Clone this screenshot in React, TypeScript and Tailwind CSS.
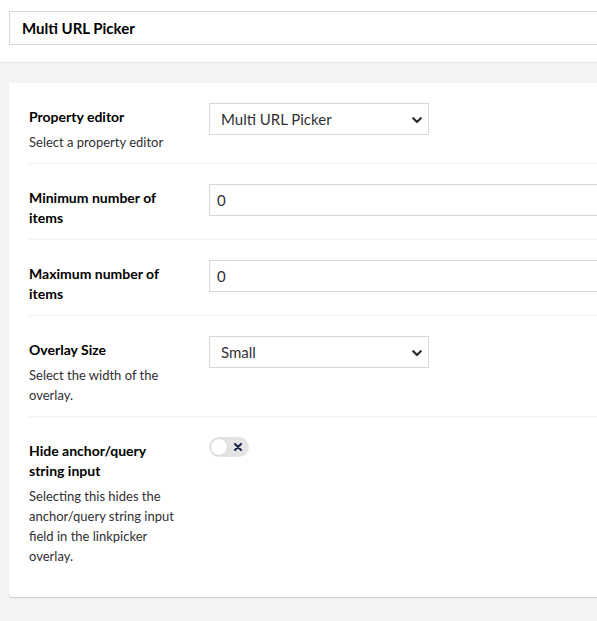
import React from "react";

const font = { fontFamily: "Lato, 'Open Sans', sans-serif" };

function Chevron() {
  return (
    <svg width="10" height="7" viewBox="0 0 10 7" className="absolute right-[6px] top-[13px]">
      <path d="M1.3 1.3 L5 5 L8.7 1.3" stroke="#303033" strokeWidth="2.3" fill="none" strokeLinecap="round" strokeLinejoin="round" />
    </svg>
  );
}

function SelectBox({ value }: { value: string }) {
  return (
    <div className="relative w-[220px] h-[32px] border border-[#d8d7d9] bg-white flex items-center pl-[11px] text-[15px] text-[#303033]">
      {value}
      <Chevron />
    </div>
  );
}

function TextBox({ value }: { value: string }) {
  return (
    <div className="flex-1 h-[32px] border border-[#d8d7d9] bg-white flex items-center pl-[7px] text-[15px] text-[#303033]">
      {value}
    </div>
  );
}

function Row({
  label,
  desc,
  children,
  last,
}: {
  label: React.ReactNode;
  desc?: React.ReactNode;
  children: React.ReactNode;
  last?: boolean;
}) {
  return (
    <div className={`flex pt-[20px] pb-[11px] ${last ? "" : "border-b border-[#f0f0f2]"}`}>
      <div className="w-[155px] shrink-0 mr-[25px] pt-[4px]">
        <div className="text-[14px] font-bold leading-[20px] text-[#000000]">{label}</div>
        {desc && <div className="mt-[5px] text-[13px] leading-[20px] text-[#303033]">{desc}</div>}
      </div>
      <div className="flex-1 flex">{children}</div>
    </div>
  );
}

export default function App() {
  return (
    <div className="w-[597px] h-[621px] overflow-hidden bg-[#f3f3f5]" style={font}>
      <div className="bg-white h-[63px] border-b border-[#e9e9eb] pt-[11px] pl-[9px]">
        <div className="h-[34px] mr-[-20px] border border-[#d8d7d9] flex items-center pl-[12px] text-[15px] font-bold text-[#000000]">
          Multi URL Picker
        </div>
      </div>
      <div className="pt-[20px] pl-[9px]">
        <div className="mr-[-30px] bg-white rounded-[3px] shadow-[0_1px_1px_rgba(0,0,0,0.16)] px-[20px] pb-[20px]">
          <Row label="Property editor" desc="Select a property editor">
            <div><SelectBox value="Multi URL Picker" /></div>
          </Row>
          <Row label="Minimum number of items">
            <TextBox value="0" />
          </Row>
          <Row label="Maximum number of items">
            <TextBox value="0" />
          </Row>
          <Row label="Overlay Size" desc="Select the width of the overlay.">
            <div><SelectBox value="Small" /></div>
          </Row>
          <Row
            label="Hide anchor/query string input"
            desc="Selecting this hides the anchor/query string input field in the linkpicker overlay."
            last
          >
            <div className="relative w-[40px] h-[20px] rounded-full bg-[#e4e4e7]">
              <div className="absolute left-[1px] top-[1px] w-[18px] h-[18px] rounded-full bg-white border border-[#d8d7d9]" />
              <svg width="8" height="8" viewBox="0 0 8 8" className="absolute left-[25px] top-[6px]">
                <path d="M1 1 L7 7 M7 1 L1 7" stroke="#1b264f" strokeWidth="2" strokeLinecap="round" />
              </svg>
            </div>
          </Row>
        </div>
      </div>
    </div>
  );
}
